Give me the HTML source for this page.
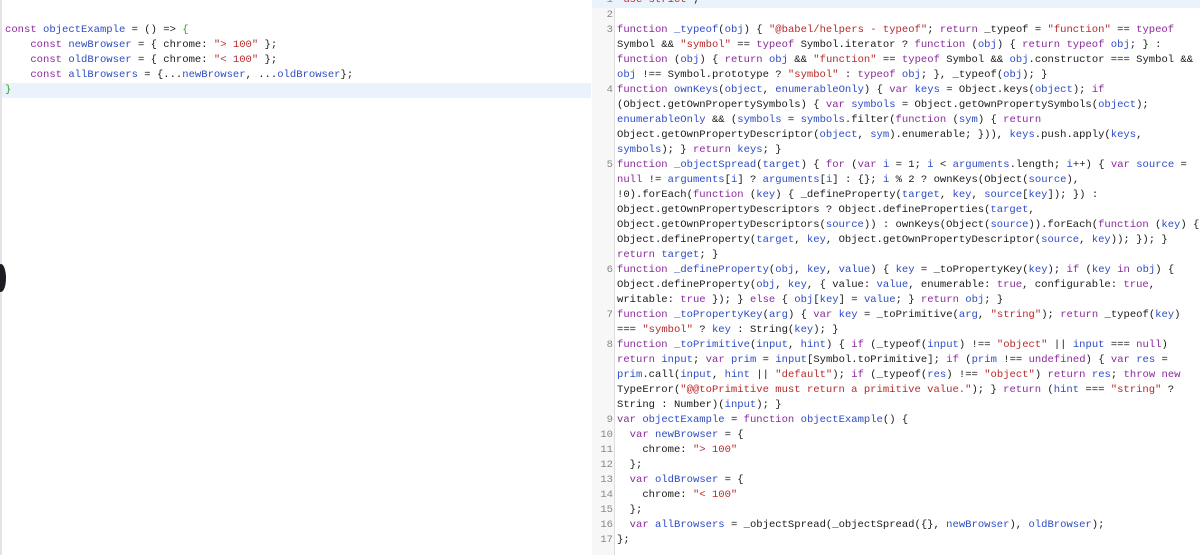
<!DOCTYPE html>
<html><head><meta charset="utf-8"><style>
body{margin:0;width:1200px;height:555px;overflow:hidden;background:#fff;font-family:"Liberation Mono",monospace;font-size:10.55px;color:#1a1a1a}
.l{position:absolute;left:0;top:0;width:592px;height:555px;border-left:2px solid #e4e4e4;box-sizing:border-box}
.r{position:absolute;left:592px;top:0;width:608px;height:555px}
.g{position:absolute;left:0;top:0;width:22px;height:555px;background:#f7f7f7;border-right:1px solid #ddd}
.row{height:15px;line-height:15px;white-space:pre;position:relative}
.n{position:absolute;left:0;width:21px;text-align:right;color:#888}
.c{position:absolute;left:25px}
.k{color:#8b2a9c}.v{color:#2d4cc4}.s{color:#b82a2a}.gr{color:#2aa02a}
.hl{background:#eaf2fc}
</style></head><body>
<div class="l">
<div style="position:absolute;top:23px;left:3px;width:586px">
<div class="row"><span class="k">const</span> <span class="v">objectExample</span> = () =&gt; <span class="gr">{</span></div>
<div class="row">    <span class="k">const</span> <span class="v">newBrowser</span> = { chrome: <span class="s">"&gt; 100"</span> };</div>
<div class="row">    <span class="k">const</span> <span class="v">oldBrowser</span> = { chrome: <span class="s">"&lt; 100"</span> };</div>
<div class="row">    <span class="k">const</span> <span class="v">allBrowsers</span> = {...<span class="v">newBrowser</span>, ...<span class="v">oldBrowser</span>};</div>
<div class="row hl" style="margin-left:-3px;padding-left:3px"><span class="gr">}</span></div>
</div>
<div style="position:absolute;left:-6px;top:264px;width:10px;height:28px;border-radius:50%;background:#1c1c24"></div>
</div>
<div class="r">
<div class="g"></div>
<div style="position:absolute;top:-7px;left:0;width:608px">
<div class="row hl"><span class="n">1</span><span class="c"><span class="s">"use strict"</span>;</span></div>
<div class="row"><span class="n">2</span></div>
<div class="row"><span class="n">3</span><span class="c"><span class="k">function</span> <span class="v">_typeof</span>(<span class="v">obj</span>) { <span class="s">"@babel/helpers - typeof"</span>; <span class="k">return</span> _typeof = <span class="s">"function"</span> == <span class="k">typeof</span></span></div>
<div class="row"><span class="c">Symbol &amp;&amp; <span class="s">"symbol"</span> == <span class="k">typeof</span> Symbol.iterator ? <span class="k">function</span> (<span class="v">obj</span>) { <span class="k">return typeof</span> <span class="v">obj</span>; } :</span></div>
<div class="row"><span class="c"><span class="k">function</span> (<span class="v">obj</span>) { <span class="k">return</span> <span class="v">obj</span> &amp;&amp; <span class="s">"function"</span> == <span class="k">typeof</span> Symbol &amp;&amp; <span class="v">obj</span>.constructor === Symbol &amp;&amp;</span></div>
<div class="row"><span class="c"><span class="v">obj</span> !== Symbol.prototype ? <span class="s">"symbol"</span> : <span class="k">typeof</span> <span class="v">obj</span>; }, _typeof(<span class="v">obj</span>); }</span></div>
<div class="row"><span class="n">4</span><span class="c"><span class="k">function</span> <span class="v">ownKeys</span>(<span class="v">object</span>, <span class="v">enumerableOnly</span>) { <span class="k">var</span> <span class="v">keys</span> = Object.keys(<span class="v">object</span>); <span class="k">if</span></span></div>
<div class="row"><span class="c">(Object.getOwnPropertySymbols) { <span class="k">var</span> <span class="v">symbols</span> = Object.getOwnPropertySymbols(<span class="v">object</span>);</span></div>
<div class="row"><span class="c"><span class="v">enumerableOnly</span> &amp;&amp; (<span class="v">symbols</span> = <span class="v">symbols</span>.filter(<span class="k">function</span> (<span class="v">sym</span>) { <span class="k">return</span></span></div>
<div class="row"><span class="c">Object.getOwnPropertyDescriptor(<span class="v">object</span>, <span class="v">sym</span>).enumerable; })), <span class="v">keys</span>.push.apply(<span class="v">keys</span>,</span></div>
<div class="row"><span class="c"><span class="v">symbols</span>); } <span class="k">return</span> <span class="v">keys</span>; }</span></div>
<div class="row"><span class="n">5</span><span class="c"><span class="k">function</span> <span class="v">_objectSpread</span>(<span class="v">target</span>) { <span class="k">for</span> (<span class="k">var</span> <span class="v">i</span> = 1; <span class="v">i</span> &lt; <span class="v">arguments</span>.length; <span class="v">i</span>++) { <span class="k">var</span> <span class="v">source</span> =</span></div>
<div class="row"><span class="c"><span class="k">null</span> != <span class="v">arguments</span>[<span class="v">i</span>] ? <span class="v">arguments</span>[<span class="v">i</span>] : {}; <span class="v">i</span> % 2 ? ownKeys(Object(<span class="v">source</span>),</span></div>
<div class="row"><span class="c">!0).forEach(<span class="k">function</span> (<span class="v">key</span>) { _defineProperty(<span class="v">target</span>, <span class="v">key</span>, <span class="v">source</span>[<span class="v">key</span>]); }) :</span></div>
<div class="row"><span class="c">Object.getOwnPropertyDescriptors ? Object.defineProperties(<span class="v">target</span>,</span></div>
<div class="row"><span class="c">Object.getOwnPropertyDescriptors(<span class="v">source</span>)) : ownKeys(Object(<span class="v">source</span>)).forEach(<span class="k">function</span> (<span class="v">key</span>) {</span></div>
<div class="row"><span class="c">Object.defineProperty(<span class="v">target</span>, <span class="v">key</span>, Object.getOwnPropertyDescriptor(<span class="v">source</span>, <span class="v">key</span>)); }); }</span></div>
<div class="row"><span class="c"><span class="k">return</span> <span class="v">target</span>; }</span></div>
<div class="row"><span class="n">6</span><span class="c"><span class="k">function</span> <span class="v">_defineProperty</span>(<span class="v">obj</span>, <span class="v">key</span>, <span class="v">value</span>) { <span class="v">key</span> = _toPropertyKey(<span class="v">key</span>); <span class="k">if</span> (<span class="v">key</span> <span class="k">in</span> <span class="v">obj</span>) {</span></div>
<div class="row"><span class="c">Object.defineProperty(<span class="v">obj</span>, <span class="v">key</span>, { value: <span class="v">value</span>, enumerable: <span class="k">true</span>, configurable: <span class="k">true</span>,</span></div>
<div class="row"><span class="c">writable: <span class="k">true</span> }); } <span class="k">else</span> { <span class="v">obj</span>[<span class="v">key</span>] = <span class="v">value</span>; } <span class="k">return</span> <span class="v">obj</span>; }</span></div>
<div class="row"><span class="n">7</span><span class="c"><span class="k">function</span> <span class="v">_toPropertyKey</span>(<span class="v">arg</span>) { <span class="k">var</span> <span class="v">key</span> = _toPrimitive(<span class="v">arg</span>, <span class="s">"string"</span>); <span class="k">return</span> _typeof(<span class="v">key</span>)</span></div>
<div class="row"><span class="c">=== <span class="s">"symbol"</span> ? <span class="v">key</span> : String(<span class="v">key</span>); }</span></div>
<div class="row"><span class="n">8</span><span class="c"><span class="k">function</span> <span class="v">_toPrimitive</span>(<span class="v">input</span>, <span class="v">hint</span>) { <span class="k">if</span> (_typeof(<span class="v">input</span>) !== <span class="s">"object"</span> || <span class="v">input</span> === <span class="k">null</span>)</span></div>
<div class="row"><span class="c"><span class="k">return</span> <span class="v">input</span>; <span class="k">var</span> <span class="v">prim</span> = <span class="v">input</span>[Symbol.toPrimitive]; <span class="k">if</span> (<span class="v">prim</span> !== <span class="k">undefined</span>) { <span class="k">var</span> <span class="v">res</span> =</span></div>
<div class="row"><span class="c"><span class="v">prim</span>.call(<span class="v">input</span>, <span class="v">hint</span> || <span class="s">"default"</span>); <span class="k">if</span> (_typeof(<span class="v">res</span>) !== <span class="s">"object"</span>) <span class="k">return</span> <span class="v">res</span>; <span class="k">throw new</span></span></div>
<div class="row"><span class="c">TypeError(<span class="s">"@@toPrimitive must return a primitive value."</span>); } <span class="k">return</span> (<span class="v">hint</span> === <span class="s">"string"</span> ?</span></div>
<div class="row"><span class="c">String : Number)(<span class="v">input</span>); }</span></div>
<div class="row"><span class="n">9</span><span class="c"><span class="k">var</span> <span class="v">objectExample</span> = <span class="k">function</span> <span class="v">objectExample</span>() {</span></div>
<div class="row"><span class="n">10</span><span class="c">  <span class="k">var</span> <span class="v">newBrowser</span> = {</span></div>
<div class="row"><span class="n">11</span><span class="c">    chrome: <span class="s">"&gt; 100"</span></span></div>
<div class="row"><span class="n">12</span><span class="c">  };</span></div>
<div class="row"><span class="n">13</span><span class="c">  <span class="k">var</span> <span class="v">oldBrowser</span> = {</span></div>
<div class="row"><span class="n">14</span><span class="c">    chrome: <span class="s">"&lt; 100"</span></span></div>
<div class="row"><span class="n">15</span><span class="c">  };</span></div>
<div class="row"><span class="n">16</span><span class="c">  <span class="k">var</span> <span class="v">allBrowsers</span> = _objectSpread(_objectSpread({}, <span class="v">newBrowser</span>), <span class="v">oldBrowser</span>);</span></div>
<div class="row"><span class="n">17</span><span class="c">};</span></div>
</div>
</div>
</body></html>
